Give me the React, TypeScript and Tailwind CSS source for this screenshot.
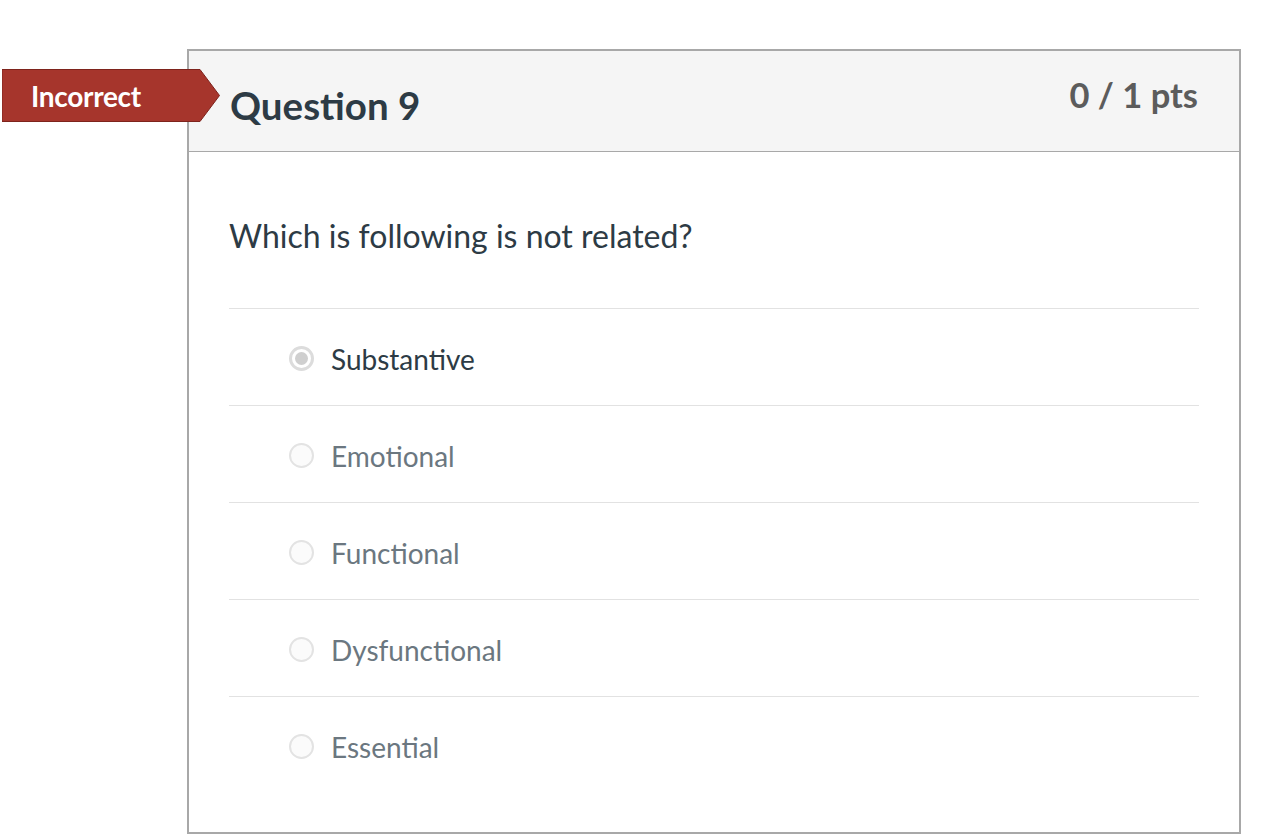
const answers = [
  { label: 'Substantive', selected: true },
  { label: 'Emotional', selected: false },
  { label: 'Functional', selected: false },
  { label: 'Dysfunctional', selected: false },
  { label: 'Essential', selected: false },
]

function Radio({ selected }: { selected: boolean }) {
  if (selected) {
    return (
      <span className="w-[25px] h-[25px] rounded-full border-[3px] border-[#dcdcdc] bg-white flex items-center justify-center shrink-0">
        <span className="w-[13px] h-[13px] rounded-full bg-[#cfcfcf]" />
      </span>
    )
  }
  return <span className="w-[25px] h-[25px] rounded-full border-2 border-[#e3e3e3] bg-[#fbfbfb] shrink-0" />
}

export default function App() {
  return (
    <div
      className="min-h-screen bg-white pt-[49px] pl-[187px]"
      style={{ fontFamily: 'Lato, "Open Sans", sans-serif' }}
    >
      <div className="relative w-[1054px] h-[785px] border-2 border-[#a8a8a8] bg-white">
        {/* Incorrect banner */}
        <div className="absolute left-[-187px] top-[18px] h-[53px] w-[218px] z-10">
          <svg className="absolute inset-0" width="218" height="53" viewBox="0 0 218 53">
            <path d="M0 0.5 H198 L217.5 26.5 L198 52.5 H0 Z" fill="#a6352c" stroke="#7e231c" strokeWidth="1" />
          </svg>
          <span className="absolute left-[29px] top-0 h-[53px] flex items-center text-[28px] font-bold text-white tracking-[-0.3px]">
            Incorrect
          </span>
        </div>

        {/* Header */}
        <div className="h-[101px] bg-[#f5f5f5] border-b border-[#a8a8a8] flex items-start justify-between px-[41px]">
          <h2 className="mt-[29px] text-[38.5px] leading-[50px] font-bold text-[#2d3b45]">Question 9</h2>
          <div className="mt-[22px] text-[34.5px] leading-[44px] font-bold text-[#5c5c5c]">0 / 1 pts</div>
        </div>

        {/* Body */}
        <div className="px-[40px]">
          <p className="pt-[56px] pb-[44px] text-[32px] leading-[56px] text-[#2d3b45]">
            Which is following is not related?
          </p>
          {answers.map((a) => (
            <div key={a.label} className="h-[97px] border-t border-[#e2e2e2] flex items-center pt-[3px] pl-[60px] gap-[17px]">
              <Radio selected={a.selected} />
              <span className={`text-[28px] ${a.selected ? 'text-[#2d3b45]' : 'text-[#6b7780]'}`}>{a.label}</span>
            </div>
          ))}
        </div>
      </div>
    </div>
  )
}
